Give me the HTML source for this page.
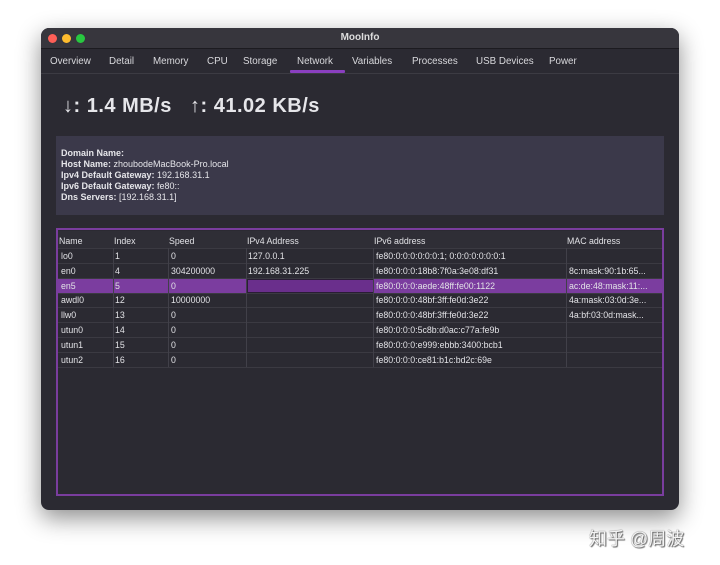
<!DOCTYPE html>
<html><head><style>
body{margin:0;width:720px;height:565px;background:#fff;position:relative;overflow:hidden;font-family:"Liberation Sans",sans-serif}
.win{position:absolute;left:41px;top:28px;width:638px;height:482px;background:#2b2a32;border-radius:8px;box-shadow:0 8px 24px rgba(0,0,0,.45);overflow:hidden}
.title{height:20px;background:#37363d;color:#ddd;font-size:10px;font-weight:bold;text-align:center;line-height:20px;border-bottom:1px solid #1c1b20}
.dot{position:absolute;top:6px;width:9px;height:9px;border-radius:50%}
.tabs{height:24px;border-bottom:1px solid #3c3b43;position:relative;font-size:9.8px;color:#d8d8dc}
.tabs span{position:absolute;top:7px}
.speed{position:absolute;left:22px;top:67px;color:#e6e6ea;font-size:20px;font-weight:bold;letter-spacing:0.5px}
.info{position:absolute;left:15px;top:108px;width:608px;height:79px;background:#3b394a;color:#e6e6ea;font-size:9px;line-height:11px}
.info div{padding-left:5px}
.tbl{position:absolute;left:15px;top:200px;width:604px;height:264px;border:2px solid #7a3d9e}
.row{position:absolute;left:0;width:604px;height:14px;font-size:8.8px;color:#e2e2e6;border-bottom:1px solid #3b3a42}
.row span{position:absolute;top:2px;white-space:nowrap}
.vl{position:absolute;top:18px;height:119px;width:1px;background:#414049}
</style></head><body>
<div class="win">
<div class="title">MooInfo</div>
<div class="dot" style="left:7px;background:#fe5f57"></div>
<div class="dot" style="left:21px;background:#febc2e"></div>
<div class="dot" style="left:35px;background:#28c840"></div>
<div class="tabs">
<span style="left:9px">Overview</span><span style="left:68px">Detail</span><span style="left:112px">Memory</span><span style="left:166px">CPU</span><span style="left:202px">Storage</span><span style="left:256px">Network</span><span style="left:311px">Variables</span><span style="left:371px">Processes</span><span style="left:435px">USB Devices</span><span style="left:508px">Power</span>
<div style="position:absolute;left:249px;top:21px;width:55px;height:3px;background:#8a3fc0;border-radius:1px"></div>
</div>
<div class="speed">↓: 1.4 MB/s &nbsp;&nbsp;↑: 41.02 KB/s</div>
<div class="info"><div style="height:12px"></div>
<div><b>Domain Name:</b></div>
<div><b>Host Name:</b> zhoubodeMacBook-Pro.local</div>
<div><b>Ipv4 Default Gateway:</b> 192.168.31.1</div>
<div><b>Ipv6 Default Gateway:</b> fe80::</div>
<div><b>Dns Servers:</b> [192.168.31.1]</div>
</div>
<div class="tbl">
<div class="row" style="top:1px;height:17px;background:#2f2e36"><span style="left:1px;top:5px">Name</span><span style="left:56px;top:5px">Index</span><span style="left:111px;top:5px">Speed</span><span style="left:189px;top:5px">IPv4 Address</span><span style="left:316px;top:5px">IPv6 address</span><span style="left:509px;top:5px">MAC address</span></div>
<div class="row" style="top:19px"><span style="left:3px">lo0</span><span style="left:57px">1</span><span style="left:113px">0</span><span style="left:190px">127.0.0.1</span><span style="left:318px">fe80:0:0:0:0:0:0:1; 0:0:0:0:0:0:0:1</span></div>
<div class="row" style="top:33.8px"><span style="left:3px">en0</span><span style="left:57px">4</span><span style="left:113px">304200000</span><span style="left:190px">192.168.31.225</span><span style="left:318px">fe80:0:0:0:18b8:7f0a:3e08:df31</span><span style="left:511px">8c:mask:90:1b:65...</span></div>
<div class="row" style="top:48.6px;background:#7b3d9f"><div style="position:absolute;left:189px;top:0px;width:125px;height:12px;background:#6a2f8c;border:1px solid #2a1d35"></div><span style="left:3px">en5</span><span style="left:57px">5</span><span style="left:113px">0</span><span style="left:318px">fe80:0:0:0:aede:48ff:fe00:1122</span><span style="left:511px">ac:de:48:mask:11:...</span></div>
<div class="row" style="top:63.4px"><span style="left:3px">awdl0</span><span style="left:57px">12</span><span style="left:113px">10000000</span><span style="left:318px">fe80:0:0:0:48bf:3ff:fe0d:3e22</span><span style="left:511px">4a:mask:03:0d:3e...</span></div>
<div class="row" style="top:78.2px"><span style="left:3px">llw0</span><span style="left:57px">13</span><span style="left:113px">0</span><span style="left:318px">fe80:0:0:0:48bf:3ff:fe0d:3e22</span><span style="left:511px">4a:bf:03:0d:mask...</span></div>
<div class="row" style="top:93px"><span style="left:3px">utun0</span><span style="left:57px">14</span><span style="left:113px">0</span><span style="left:318px">fe80:0:0:0:5c8b:d0ac:c77a:fe9b</span></div>
<div class="row" style="top:107.8px"><span style="left:3px">utun1</span><span style="left:57px">15</span><span style="left:113px">0</span><span style="left:318px">fe80:0:0:0:e999:ebbb:3400:bcb1</span></div>
<div class="row" style="top:122.6px"><span style="left:3px">utun2</span><span style="left:57px">16</span><span style="left:113px">0</span><span style="left:318px">fe80:0:0:0:ce81:b1c:bd2c:69e</span></div>
<div class="vl" style="left:55px"></div><div class="vl" style="left:110px"></div><div class="vl" style="left:188px"></div><div class="vl" style="left:315px"></div><div class="vl" style="left:508px"></div>
</div>
</div>
<div style="position:absolute;left:589px;top:525px;font-size:18px;color:#f4f4f4;text-shadow:0 0 1px #444,1px 1px 1px #666;font-family:'Liberation Sans','Noto Sans CJK SC',sans-serif">知乎 @周波</div>
</body></html>
